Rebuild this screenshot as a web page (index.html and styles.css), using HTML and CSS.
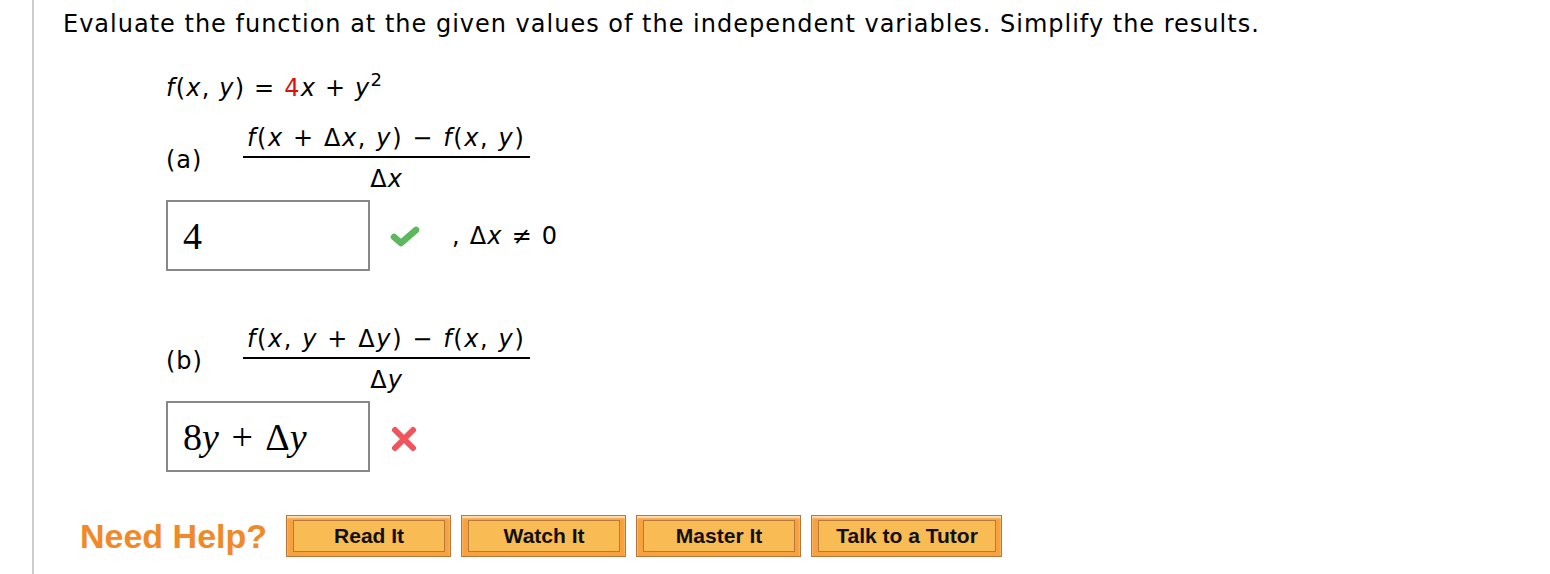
FILE: index.html
```html
<!DOCTYPE html>
<html>
<head>
<meta charset="utf-8">
<link rel="stylesheet" href="styles.css">
</head>
<body>
<div class="page">
  <p class="title">Evaluate the function at the given values of the independent variables. Simplify the results.</p>
  <div class="problem">
    <div class="eq"><i>f</i>(<i>x</i>, <i>y</i>) = <span class="red">4</span><i>x</i> + <i>y</i><sup>2</sup></div>

    <div class="part part-a">
      <span class="label">(a)</span>
      <span class="frac">
        <span class="num"><i>f</i>(<i>x</i> + Δ<i>x</i>, <i>y</i>) − <i>f</i>(<i>x</i>, <i>y</i>)</span>
        <span class="den">Δ<i>x</i></span>
      </span>
    </div>
    <div class="answer">
      <div class="box">4</div>
      <svg class="mark" width="30" height="24" viewBox="0 0 30 24"><path d="M4 13 L11 19 L26 6" fill="none" stroke="#5cb85c" stroke-width="6.5" stroke-linecap="round" stroke-linejoin="round"/></svg>
      <span class="cond">, Δ<i>x</i> ≠ 0</span>
    </div>

    <div class="part part-b">
      <span class="label">(b)</span>
      <span class="frac">
        <span class="num"><i>f</i>(<i>x</i>, <i>y</i> + Δ<i>y</i>) − <i>f</i>(<i>x</i>, <i>y</i>)</span>
        <span class="den">Δ<i>y</i></span>
      </span>
    </div>
    <div class="answer">
      <div class="box"><span>8<i>y</i> + Δ<i>y</i></span></div>
      <svg class="mark mark-x" width="28" height="28" viewBox="0 0 28 28"><path d="M5 5 L23 23 M23 5 L5 23" fill="none" stroke="#f0545c" stroke-width="6" stroke-linecap="round"/></svg>
    </div>
  </div>

  <div class="help">
    <span class="need">Need Help?</span>
    <span class="btn"><span>Read It</span></span>
    <span class="btn"><span>Watch It</span></span>
    <span class="btn"><span>Master It</span></span>
    <span class="btn btn-wide"><span>Talk to a Tutor</span></span>
  </div>
</div>
</body>
</html>
```
FILE: styles.css
```css
html, body { margin: 0; padding: 0; background: #fff; }
.page {
  margin-left: 32px;
  border-left: 2px solid #cccccc;
  min-height: 574px;
  box-sizing: border-box;
  padding: 8px 0 0 29px;
  font-family: "DejaVu Sans", Verdana, sans-serif;
  color: #000;
}
.title { margin: 0; font-size: 24px; letter-spacing: 1px; line-height: 32px; }
.problem { margin-left: 103px; font-size: 24px; letter-spacing: 1.2px; }
.eq { margin-top: 33px; line-height: 30px; }
.eq sup { font-size: 18px; line-height: 0; vertical-align: 10px; }
.red { color: #e01010; }
.part { display: flex; align-items: center; margin-top: 21px; }
.label { width: 77px; letter-spacing: 1px; }
.frac { display: inline-flex; flex-direction: column; align-items: center; }
.num { padding: 0 5px 4px 4px; border-bottom: 2px solid #000; line-height: 28px; letter-spacing: 1.6px; }
.den { line-height: 34px; padding-top: 4px; }
.answer { display: flex; align-items: center; margin-top: 4px; }
.box {
  width: 204px; height: 71px; box-sizing: border-box;
  border: 2px solid #888;
  display: flex; align-items: center;
  padding-left: 15px;
  font-family: "Liberation Serif", "Times New Roman", serif;
  font-size: 38px; letter-spacing: 0;
  word-spacing: 3px;
}
.mark { margin-left: 20px; }
.mark-x { margin-top: 4px; }
.cond { margin-left: 32px; }
.part-b { margin-top: 54px; }
.help { display: flex; align-items: center; margin-top: 43px; margin-left: 17px; }
.need {
  font-family: "Liberation Sans", Arial, sans-serif;
  font-weight: bold; font-size: 34px; color: #f08a28;
  margin-right: 19px;
}
.btn {
  width: 165px; height: 42px; box-sizing: border-box;
  border: 1px solid #b8763a;
  background: #f7a23e;
  padding: 4px 5px 4px 6px;
  margin-right: 10px;
  display: flex;
  box-shadow: inset 0 2px 2px #fde3b8;
}
.btn span {
  flex: 1;
  border: 1px solid #b57a3c;
  background: #f9bb54;
  display: flex; align-items: center; justify-content: center;
  font-family: "Liberation Sans", Arial, sans-serif;
  font-weight: bold; font-size: 21px; color: #111;
}
.btn-wide { width: 191px; }
```
